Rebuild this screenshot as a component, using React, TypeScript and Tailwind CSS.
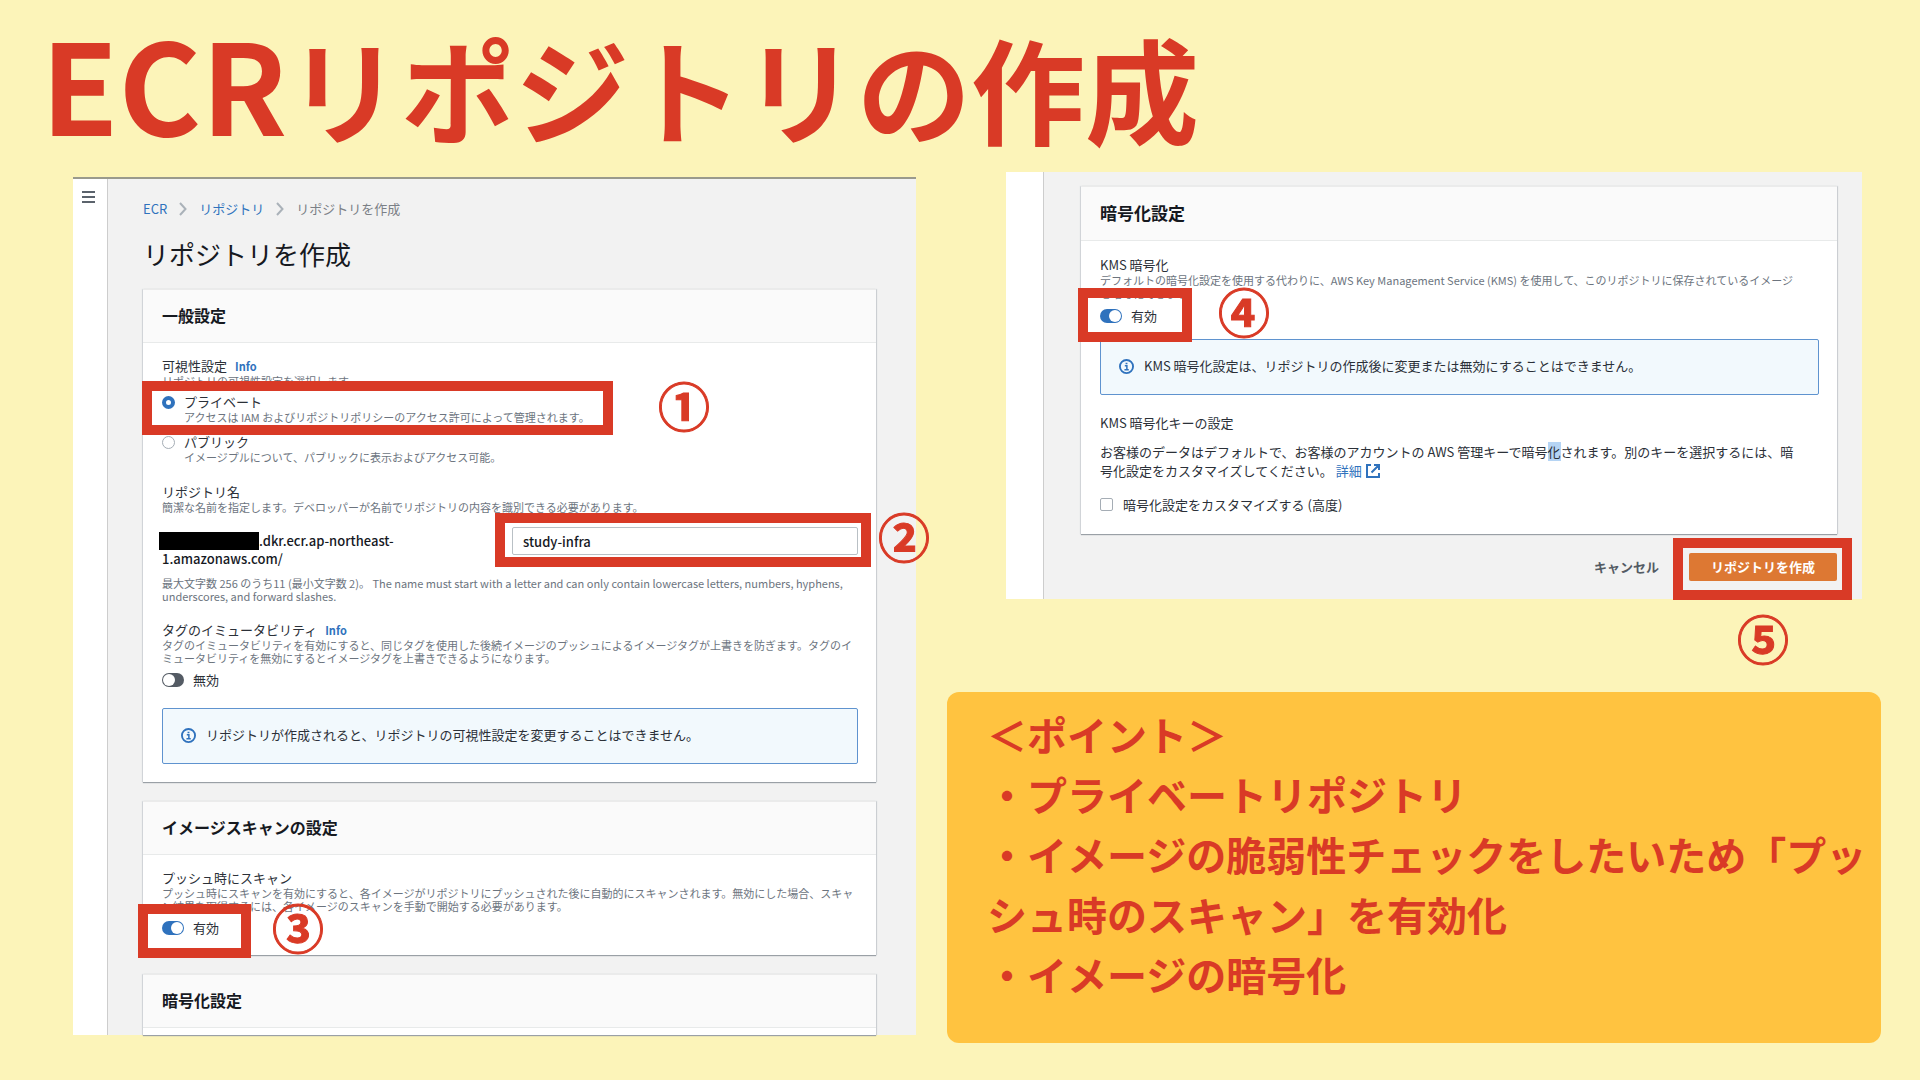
import type { ReactNode } from 'react'
import clsx from 'clsx'

type MarkerProps = {
  label: string
  className: string
}

// Red frame laid over the control that a step refers to
function Frame({ className }: { className: string }) {
  return <span aria-hidden="true" className={clsx('pointer-events-none absolute z-10 border-10 border-[#d93a26]', className)} />
}

function Marker({ label, className }: MarkerProps) {
  return (
    <span
      className={clsx(
        'absolute z-10 text-[52px] leading-[48px] font-bold text-[#d93a26] [-webkit-text-stroke:1px_#d93a26]',
        className
      )}
    >
      {label}
    </span>
  )
}

function Card({ title, children, className }: { title: string; children?: ReactNode; className?: string }) {
  return (
    <section className={clsx('border-t border-[#ebebeb] bg-white shadow-[0_1px_1px_#9aa0a6,1px_0_1px_#d5d8db,-1px_0_1px_#dcdfe2]', className)}>
      <h3 className="flex h-[53px] items-center border-b border-[#e8eaea] bg-[#fafafa] px-[19px] pb-[2px] font-bold text-[#16191f]">
        {title}
      </h3>
      <div className="pr-[18px] pl-[19px]">{children}</div>
    </section>
  )
}

function InfoLink() {
  return (
    <a href="#info" className="ml-2 text-[11px] font-bold text-[#2f72bd]">
      Info
    </a>
  )
}

function Description({ children }: { children: ReactNode }) {
  return <p className="text-[11px] leading-[13px] text-[#6c747e]">{children}</p>
}

function InfoIcon() {
  return (
    <svg viewBox="0 0 16 16" className="size-[15px] shrink-0" fill="none" stroke="#2f72bd" strokeWidth="2">
      <circle cx="8" cy="8" r="7" />
      <path d="M6.2 7.3H8.4V11M5.8 11.4h4.6M7 4.8h2" strokeWidth="1.6" />
    </svg>
  )
}

function Alert({ children }: { children: ReactNode }) {
  return (
    <div className="flex h-14 items-center gap-[10px] rounded-xs border border-[#5f93cf] bg-[#f2f9fd] pb-[2px] pl-[18px] text-[#2b3038]">
      <InfoIcon />
      <p>{children}</p>
    </div>
  )
}

function Toggle({ id, label, defaultChecked }: { id: string; label: string; defaultChecked?: boolean }) {
  return (
    <div className="flex items-center gap-[9px]">
      <input
        id={id}
        type="checkbox"
        role="switch"
        defaultChecked={defaultChecked}
        className="h-[14px] w-[22px] appearance-none rounded-full bg-[#545b64] p-px before:block before:size-3 before:rounded-full before:bg-white checked:bg-[#2f72bd] checked:before:ml-2"
      />
      <label htmlFor={id}>{label}</label>
    </div>
  )
}

function Visibility({ id, label, hint, defaultChecked }: { id: string; label: string; hint: string; defaultChecked?: boolean }) {
  return (
    <div className="flex gap-[9px]">
      <input
        id={id}
        type="radio"
        name="visibility"
        defaultChecked={defaultChecked}
        className="mt-[3px] size-[13px] shrink-0 appearance-none rounded-full border border-[#a5adb5] bg-white checked:border-4 checked:border-[#2f72bd]"
      />
      <div>
        <label htmlFor={id} className="block">
          {label}
        </label>
        <Description>{hint}</Description>
      </div>
    </div>
  )
}

function Chevron() {
  return (
    <svg viewBox="0 0 8 14" className="h-[14px] w-2" fill="none" stroke="#aab2b9" strokeWidth="2">
      <path d="M1 1l5.5 6L1 13" />
    </svg>
  )
}

function CreateScreen() {
  return (
    <div className="mt-[5px] flex border-t-2 border-[#9a9a8c] bg-[#f2f2f2]">
      <div className="w-[35px] shrink-0 border-r border-[#cdcdcd] bg-white pt-3 pl-[9px]">
        <button type="button" aria-label="メニュー" className="block">
          <svg viewBox="0 0 13 12" className="h-3 w-[13px]" stroke="#5b636c" strokeWidth="1.8">
            <path d="M0 1h13M0 6h13M0 11h13" />
          </svg>
        </button>
      </div>

      <div className="min-w-0 grow pr-10 pl-[35px]">
        <nav className="mt-[21px] flex items-center gap-3 text-[#2f72bd]">
          <a href="#ecr">ECR</a>
          <Chevron />
          <a href="#repositories">リポジトリ</a>
          <Chevron />
          <span className="text-[#7b8086]">リポジトリを作成</span>
        </nav>
        <h2 className="mt-[19px] text-[26px] leading-[34px] text-[#16191f]">リポジトリを作成</h2>

        <Card title="一般設定" className="mt-[18px] pb-[18px] [&>h3]:text-base">
          <p className="pt-[14px]">
            可視性設定
            <InfoLink />
          </p>
          <Description>リポジトリの可視性設定を選択します</Description>
          <div className="relative mt-[5px]">
            <Visibility
              id="private"
              label="プライベート"
              hint="アクセスは IAM およびリポジトリポリシーのアクセス許可によって管理されます。"
              defaultChecked
            />
            <Frame className="-top-3 -left-5 h-[54px] w-[471px]" />
            <Marker label="①" className="-top-3 left-[496px]" />
          </div>
          <div className="mt-[9px]">
            <Visibility id="public" label="パブリック" hint="イメージプルについて、パブリックに表示およびアクセス可能。" />
          </div>

          <label htmlFor="repository" className="mt-[19px] block">
            リポジトリ名
          </label>
          <Description>簡潔な名前を指定します。デベロッパーが名前でリポジトリの内容を識別できる必要があります。</Description>
          <div className="relative mt-[13px] flex justify-between">
            <p className="-ml-[3px] pt-[5px] font-medium text-[#16191f]">
              <span className="inline-block h-[18px] w-[100px] bg-black align-top" />
              .dkr.ecr.ap-northeast-
              <br />
              <span className="ml-[3px]">1.amazonaws.com/</span>
            </p>
            <input
              id="repository"
              type="text"
              defaultValue="study-infra"
              className="h-7 w-[346px] rounded-xs border border-[#b9c0c5] bg-white px-[10px] font-medium text-[#16191f]"
            />
            <Frame className="-top-[14px] -right-[13px] h-[54px] w-[376px]" />
            <Marker label="②" className="-top-[15px] -right-[72px]" />
          </div>
          <div className="mt-[9px]">
            <Description>
              最大文字数 256 のうち11 (最小文字数 2)。 The name must start with a letter and can only contain lowercase letters,
              numbers, hyphens, underscores, and forward slashes.
            </Description>
          </div>

          <p className="mt-[18px]">
            タグのイミュータビリティ
            <InfoLink />
          </p>
          <Description>
            タグのイミュータビリティを有効にすると、同じタグを使用した後続イメージのプッシュによるイメージタグが上書きを防ぎます。タグのイミュータビリティを無効にするとイメージタグを上書きできるようになります。
          </Description>
          <div className="mt-[6px] mb-[19px]">
            <Toggle id="immutability" label="無効" />
          </div>
          <Alert>リポジトリが作成されると、リポジトリの可視性設定を変更することはできません。</Alert>
        </Card>

        <Card title="イメージスキャンの設定" className="mt-[19px] pb-[18px] [&>h3]:text-base">
          <p className="pt-[14px]">プッシュ時にスキャン</p>
          <Description>
            プッシュ時にスキャンを有効にすると、各イメージがリポジトリにプッシュされた後に自動的にスキャンされます。無効にした場合、スキャン結果を取得するには、各イメージのスキャンを手動で開始する必要があります。
          </Description>
          <div className="relative mt-[6px]">
            <Toggle id="scan" label="有効" defaultChecked />
            <Frame className="-top-[15px] -left-6 h-[54px] w-[113px]" />
            <Marker label="③" className="-top-4 left-[110px]" />
          </div>
        </Card>

        <Card title="暗号化設定" className="mt-[19px] pb-[7px] [&>h3]:text-base" />
      </div>
    </div>
  )
}

function EncryptionScreen() {
  return (
    <div className="mr-[19px] ml-[59px] flex bg-[#f2f2f2]">
      <div className="w-[38px] shrink-0 border-r border-[#cdcdcd] bg-white" />
      <div className="min-w-0 grow pt-[14px] pr-[25px] pb-[18px] pl-[37px]">
        <Card title="暗号化設定" className="pb-5 [&>h3]:h-[54px] [&>h3]:text-[17px]">
          <p className="pt-[15px]">KMS 暗号化</p>
          <Description>
            デフォルトの暗号化設定を使用する代わりに、AWS Key Management Service (KMS) を使用して、このリポジトリに保存されているイメージ
            <br />
            を暗号化できます。
          </Description>
          <div className="relative mt-[7px] mb-[14px]">
            <Toggle id="kms" label="有効" defaultChecked />
            <Frame className="-top-[19px] -left-[22px] h-[54px] w-[114px]" />
            <Marker label="④" className="-top-5 left-[118px]" />
          </div>
          <Alert>KMS 暗号化設定は、リポジトリの作成後に変更または無効にすることはできません。</Alert>

          <p className="mt-[19px]">KMS 暗号化キーの設定</p>
          <p className="mt-[10px] leading-[19px]">
            お客様のデータはデフォルトで、お客様のアカウントの AWS 管理キーで暗号
            <mark className="bg-[#b5d4f4] text-inherit">化</mark>
            されます。別のキーを選択するには、暗
            <br />
            号化設定をカスタマイズしてください。{' '}
            <a href="#details" className="text-[#2f72bd]">
              詳細
              <svg viewBox="0 0 14 14" className="mb-[3px] ml-1 inline size-[14px]" fill="none" stroke="currentColor" strokeWidth="2">
                <path d="M5 1H1v12h12V9M8 1h5v5M13 1L5.5 8.5" />
              </svg>
            </a>
          </p>
          <div className="mt-[15px] flex items-center gap-[10px]">
            <input id="customize" type="checkbox" className="size-[13px] appearance-none rounded-xs border border-[#a5adb5] bg-white" />
            <label htmlFor="customize">暗号化設定をカスタマイズする (高度)</label>
          </div>
        </Card>

        <div className="mt-[19px] flex items-center justify-end gap-[30px] font-bold">
          <button type="button" className="text-[#545b64]">
            キャンセル
          </button>
          <div className="relative">
            <button type="button" className="block h-7 w-[148px] rounded-xs bg-[#dd7833] text-white">
              リポジトリを作成
            </button>
            <Frame className="-top-[15px] -right-[15px] h-[62px] w-[179px]" />
            <Marker label="⑤" className="top-[61px] right-12" />
          </div>
        </div>
      </div>
    </div>
  )
}

const points = [
  '＜ポイント＞',
  '・プライベートリポジトリ',
  '・イメージの脆弱性チェックをしたいため「プッシュ時のスキャン」を有効化',
  '・イメージの暗号化',
]

export default function App() {
  return (
    <main
      lang="ja"
      className="min-h-screen bg-[#fcf4b9] pr-[39px] pb-9 pl-[73px] font-['Noto_Sans_CJK_JP',sans-serif] text-[13px] leading-[18px] text-[#2b3038]"
    >
      <h1 className="-ml-8 flex h-[172px] items-baseline pt-[6px] text-[114px] leading-[150px] font-bold whitespace-nowrap text-[#d93a26]">
        <span className="text-[126px]">ECR</span>リポジトリの作成
      </h1>

      <div className="grid grid-cols-[843fr_934fr] items-start gap-x-[31px]">
        <CreateScreen />
        <div>
          <EncryptionScreen />
          <div className="mt-[93px] rounded-xl bg-[#ffc340] pt-3 pr-3 pb-[39px] pl-10 text-[40px] leading-[60px] font-bold text-[#d93a26]">
            {points.map((point) => (
              <p key={point} className="break-all">
                {point}
              </p>
            ))}
          </div>
        </div>
      </div>
    </main>
  )
}
